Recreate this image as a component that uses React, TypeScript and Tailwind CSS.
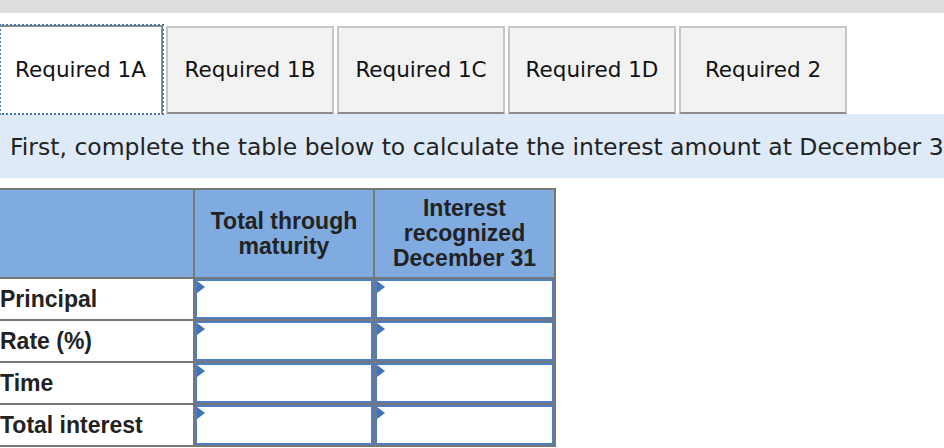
import React from 'react';

const tabs = ['Required 1A', 'Required 1B', 'Required 1C', 'Required 1D', 'Required 2'];
const rows = ['Principal', 'Rate (%)', 'Time', 'Total interest'];

function InputCell({ last }: { last?: boolean }) {
    return (
        <div className={`h-full ${last ? 'flex-1' : 'w-[180px] border-r-2 border-[#777777]'}`}>
            <div className="relative h-full border-2 border-[#4f7fc2] bg-white">
                <svg className="absolute left-0 top-0" width="8" height="12" viewBox="0 0 8 12">
                    <path d="M0 0 L8 6 L0 12 Z" fill="#3f74bd" />
                </svg>
            </div>
        </div>
    );
}

export default function App() {
    return (
        <div className="w-[944px] h-[448px] overflow-hidden bg-white">
            <div className="h-[13px] bg-[#dedede]" />
            <div className="flex items-end h-[101px] pt-[12px] gap-[3px]" style={{ fontFamily: '"DejaVu Sans", Verdana, sans-serif' }}>
                {tabs.map((t, i) =>
                    i === 0 ? (
                        <div key={t} className="relative h-full w-[163px] bg-white border-t-2 border-r-2 border-[#8c8c8c] flex items-center justify-center text-[21.5px] text-[#111] outline-dotted outline-2 outline-[#4a78b8] outline-offset-[-1px]">
                            {t}
                        </div>
                    ) : (
                        <div key={t} className="h-[88px] w-[168px] bg-[#f2f2f2] border-2 border-b-[#8c8c8c] border-[#c6c6c6] flex items-center justify-center text-[21.5px] text-[#111]">
                            {t}
                        </div>
                    )
                )}
            </div>
            <div className="h-[64px] bg-[#deeaf8] flex items-center pl-[10px] pt-[4px] whitespace-nowrap overflow-hidden text-[23.5px] text-[#222]" style={{ fontFamily: '"DejaVu Sans", Verdana, sans-serif' }}>
                First, complete the table below to calculate the interest amount at December 31.
            </div>
            <div className="mt-[10px] w-[556px] border-t-2 border-r-2 border-[#777777] text-[#222] font-bold" style={{ fontFamily: '"Liberation Sans", Arial, sans-serif' }}>
                <div className="flex h-[89px] bg-[#80abe0] border-b-2 border-[#777777] text-[23px] leading-[25px] text-center">
                    <div className="w-[195px] border-r-2 border-[#777777]" />
                    <div className="w-[180px] border-r-2 border-[#777777] flex items-center justify-center">Total through<br />maturity</div>
                    <div className="flex-1 flex items-center justify-center">Interest<br />recognized<br />December 31</div>
                </div>
                {rows.map(r => (
                    <div key={r} className="flex h-[42px] border-b-2 border-[#777777]">
                        <div className="w-[195px] border-r-2 border-[#777777] flex items-center text-[23px]">{r}</div>
                        <InputCell />
                        <InputCell last />
                    </div>
                ))}
            </div>
        </div>
    );
}
